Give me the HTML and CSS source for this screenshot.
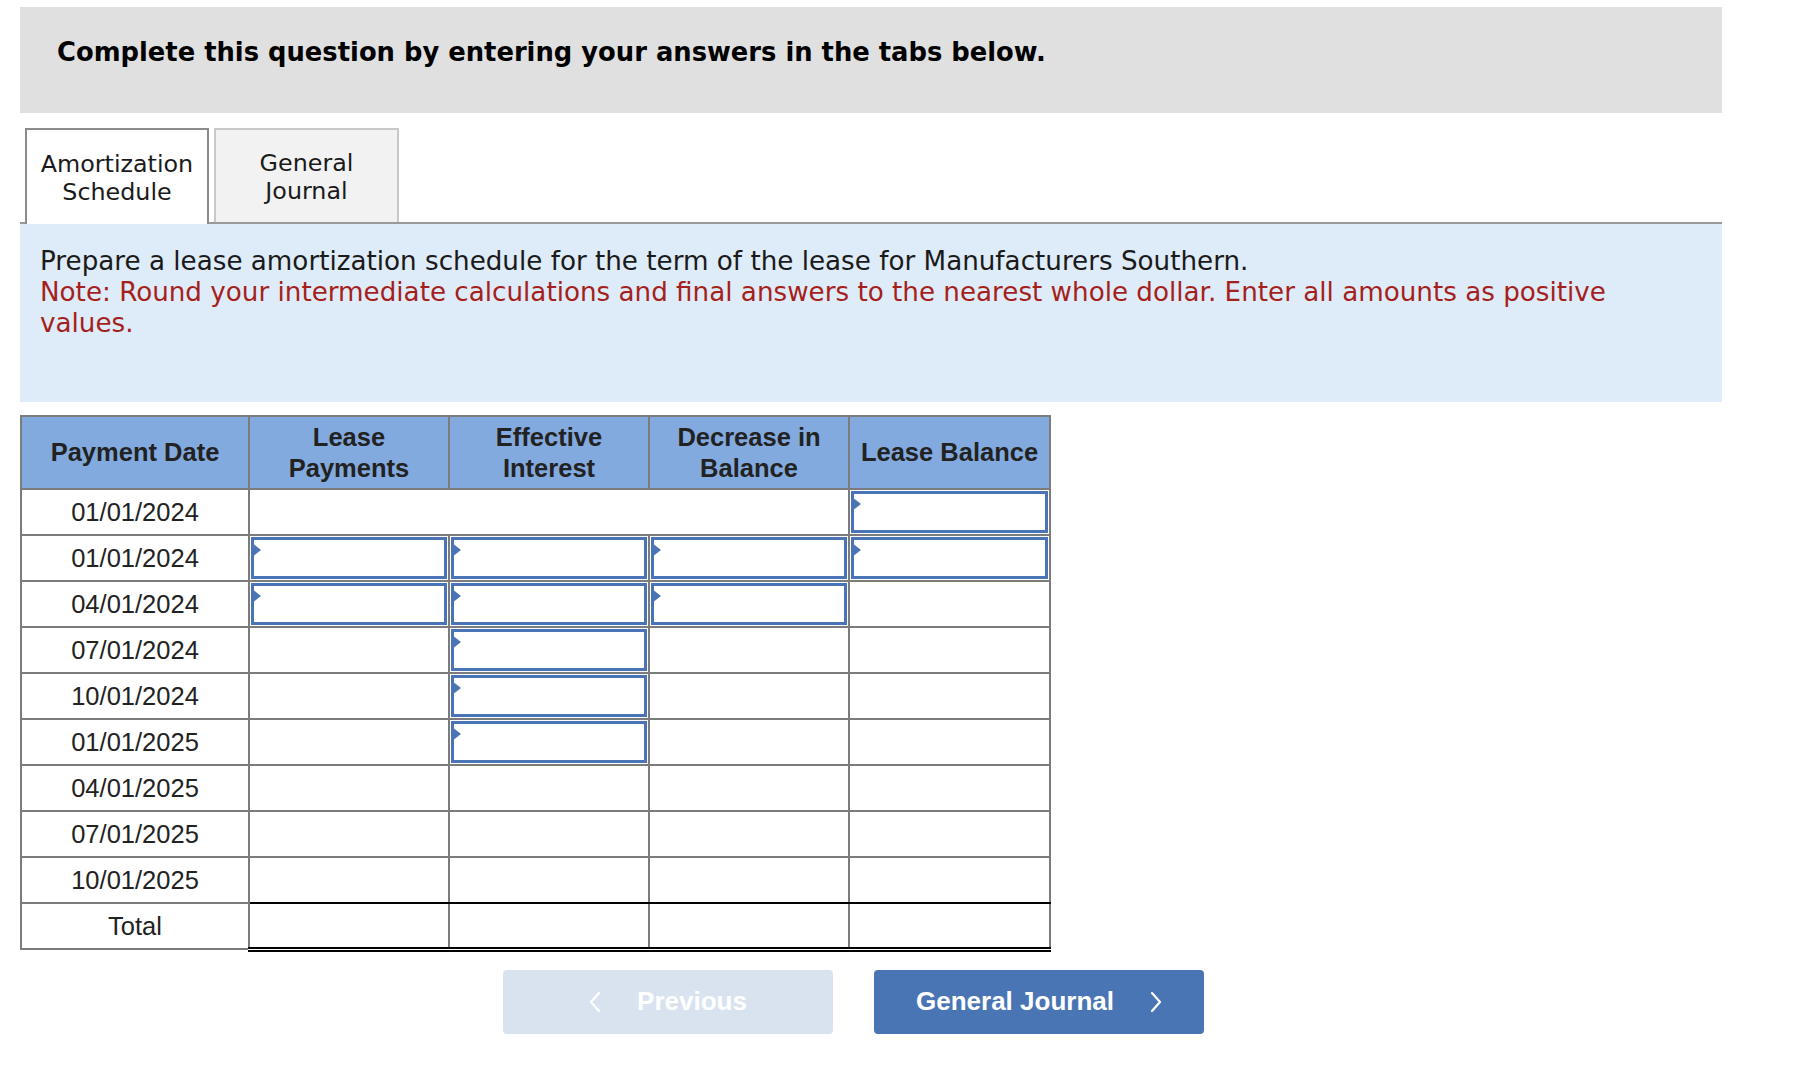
FILE: index.html
```html
<!DOCTYPE html>
<html>
<head>
<meta charset="utf-8">
<link rel="stylesheet" href="styles.css">
</head>
<body>
<div class="page">
  <div class="banner">Complete this question by entering your answers in the tabs below.</div>

  <div class="tabs">
    <div class="tab active">Amortization<br>Schedule</div>
    <div class="tab">General<br>Journal</div>
  </div>

  <div class="panel">
    <div class="prompt">Prepare a lease amortization schedule for the term of the lease for Manufacturers Southern.</div>
    <div class="note">Note: Round your intermediate calculations and final answers to the nearest whole dollar. Enter all amounts as positive values.</div>
  </div>

  <table class="sched">
    <colgroup>
      <col class="c1"><col class="c2"><col class="c3"><col class="c4"><col class="c5">
    </colgroup>
    <thead>
      <tr class="hrow">
        <th>Payment Date</th>
        <th>Lease<br>Payments</th>
        <th>Effective<br>Interest</th>
        <th>Decrease in<br>Balance</th>
        <th>Lease Balance</th>
      </tr>
    </thead>
    <tbody>
      <tr>
        <td>01/01/2024</td>
        <td colspan="3"></td>
        <td class="in"><div class="box"></div></td>
      </tr>
      <tr>
        <td>01/01/2024</td>
        <td class="in"><div class="box"></div></td>
        <td class="in"><div class="box"></div></td>
        <td class="in"><div class="box"></div></td>
        <td class="in"><div class="box"></div></td>
      </tr>
      <tr>
        <td>04/01/2024</td>
        <td class="in"><div class="box"></div></td>
        <td class="in"><div class="box"></div></td>
        <td class="in"><div class="box"></div></td>
        <td></td>
      </tr>
      <tr>
        <td>07/01/2024</td>
        <td></td>
        <td class="in"><div class="box"></div></td>
        <td></td>
        <td></td>
      </tr>
      <tr>
        <td>10/01/2024</td>
        <td></td>
        <td class="in"><div class="box"></div></td>
        <td></td>
        <td></td>
      </tr>
      <tr>
        <td>01/01/2025</td>
        <td></td>
        <td class="in"><div class="box"></div></td>
        <td></td>
        <td></td>
      </tr>
      <tr>
        <td>04/01/2025</td>
        <td></td><td></td><td></td><td></td>
      </tr>
      <tr>
        <td>07/01/2025</td>
        <td></td><td></td><td></td><td></td>
      </tr>
      <tr class="pre">
        <td>10/01/2025</td>
        <td></td><td></td><td></td><td></td>
      </tr>
      <tr class="total">
        <td>Total</td>
        <td class="tot"></td><td class="tot"></td><td class="tot"></td><td class="tot"></td>
      </tr>
    </tbody>
  </table>

  <div class="nav">
    <button class="btn prev">
      <svg class="chev" width="12" height="22" viewBox="0 0 12 22"><path d="M10 2 L2 11 L10 20" fill="none" stroke="currentColor" stroke-width="2.2" stroke-linecap="round" stroke-linejoin="round"/></svg>
      <span>Previous</span>
    </button>
    <button class="btn next">
      <span>General Journal</span>
      <svg class="chev" width="12" height="22" viewBox="0 0 12 22"><path d="M2 2 L10 11 L2 20" fill="none" stroke="currentColor" stroke-width="2.2" stroke-linecap="round" stroke-linejoin="round"/></svg>
    </button>
  </div>
</div>
</body>
</html>
```

FILE: styles.css
```css
* { box-sizing: border-box; }

body {
  margin: 0;
  background: #fff;
  font-family: "DejaVu Sans", Verdana, sans-serif;
  color: #1a1a1a;
}

.page {
  width: 1722px;
  padding: 7px 0 40px 20px;
}

.banner {
  background: #e0e0e0;
  height: 106px;
  padding: 30px 0 0 37px;
  font-weight: bold;
  font-size: 25.8px;
  line-height: 30px;
  color: #000;
}

.tabs {
  display: flex;
  gap: 5px;
  margin-top: 15px;
  padding-left: 5px;
  border-bottom: 2px solid #9a9a9a;
  height: 96px;
}

.tab {
  width: 185px;
  height: 94px;
  display: flex;
  align-items: center;
  justify-content: center;
  text-align: center;
  font-size: 23.8px;
  line-height: 28px;
  color: #1a1a1a;
  background: #f2f2f2;
  border: 2px solid #c8c8c8;
  border-bottom: none;
  padding-top: 2px;
}

.tab.active {
  width: 184px;
  height: 96px;
  background: #fff;
  border-color: #8c8c8c;
  position: relative;
  z-index: 1;
}

.panel {
  background: #deebf8;
  height: 178px;
  padding: 22px 30px 0 20px;
  font-size: 26.2px;
  line-height: 31px;
}

.prompt { color: #1a1a1a; }
.note { color: #a51f1c; }

.sched {
  margin-top: 13px;
  border-collapse: collapse;
  table-layout: fixed;
  width: 1029px;
  font-family: "Liberation Sans", Arial, sans-serif;
  font-size: 25.5px;
  color: #222;
}

.c1 { width: 228px; }
.c2 { width: 200px; }
.c3 { width: 200px; }
.c4 { width: 200px; }
.c5 { width: 201px; }

.sched th,
.sched td {
  border: 2px solid #7c7c7c;
  padding: 0;
  text-align: center;
  vertical-align: middle;
}

.sched th {
  background: #82aadf;
  font-weight: bold;
  line-height: 31px;
}

.hrow { height: 73px; }
.sched tbody tr { height: 46px; }

.sched td.in { padding: 1px; }

.box {
  height: 42px;
  border: 3px solid #4a74b6;
  background: #fff;
  position: relative;
}

.box::before {
  content: "";
  position: absolute;
  left: -2px;
  top: 3px;
  border-left: 9px solid #4a74b6;
  border-top: 7px solid transparent;
  border-bottom: 7px solid transparent;
}

.pre td + td { border-bottom-color: #000; }

.sched td.tot {
  border-top: 2px solid #000;
  border-bottom: 5px double #000;
}

.nav {
  display: flex;
  gap: 41px;
  margin-top: 18px;
  padding-left: 483px;
}

.btn {
  width: 330px;
  height: 64px;
  border: none;
  border-radius: 4px;
  display: flex;
  align-items: center;
  justify-content: center;
  gap: 36px;
  font-family: "Liberation Sans", Arial, sans-serif;
  font-weight: bold;
  font-size: 26px;
  color: #fff;
  padding: 0;
}

.btn.prev { background: #d9e3f0; }
.btn.next { background: #4a75b4; }

.chev { display: block; }
```
